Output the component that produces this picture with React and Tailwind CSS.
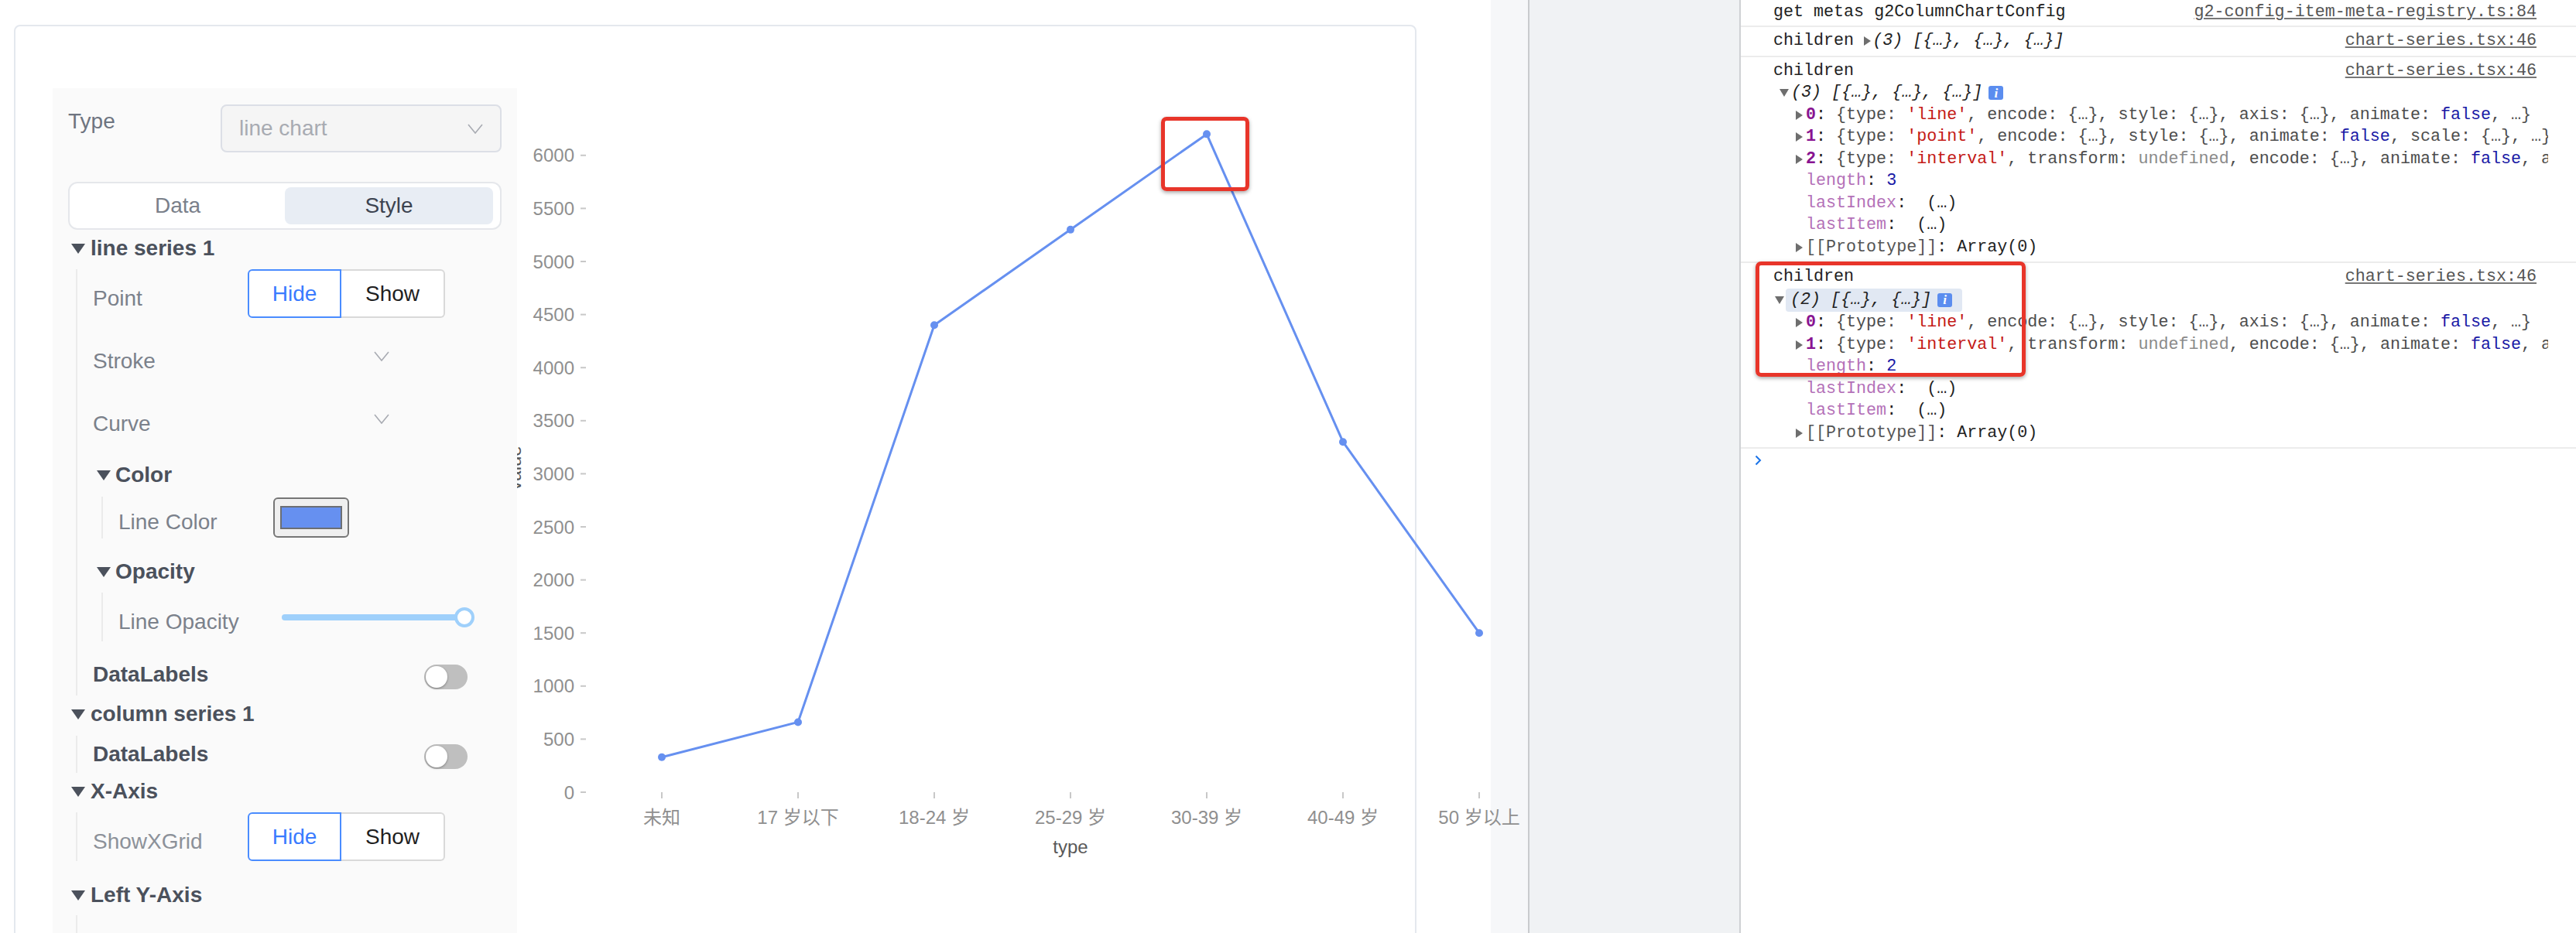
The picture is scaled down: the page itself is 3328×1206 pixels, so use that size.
import React from "react";

const cats = ["未知", "17 岁以下", "18-24 岁", "25-29 岁", "30-39 岁", "40-49 岁", "50 岁以上"];
const vals = [330, 660, 4400, 5300, 6200, 3300, 1500];
const X = (i) => 187 + 176 * i;
const Y = (v) => 910 - v * 0.1372;

function Chart() {
  const pts = vals.map((v, i) => `${X(i)},${Y(v).toFixed(1)}`).join(" ");
  const ticks = Array.from({ length: 13 }, (_, i) => i * 500);
  return (
    <svg
      width="1320"
      height="1092"
      viewBox="0 0 1320 1092"
      className="shrink-0"
      fontFamily="'Liberation Sans','Noto Sans CJK SC',sans-serif"
    >
      <text transform="translate(5,491) rotate(-90)" textAnchor="middle" fontSize="24" fill="#555">
        value
      </text>
      {ticks.map((t) => (
        <g key={t}>
          <text x="74" y={Y(t)} textAnchor="end" dominantBaseline="central" fontSize="24" fill="#8f8f8f">
            {t}
          </text>
          <line x1="82" x2="89" y1={Y(t)} y2={Y(t)} stroke="#c8c8c8" strokeWidth="2" />
        </g>
      ))}
      {cats.map((c, i) => (
        <g key={c}>
          <line x1={X(i)} x2={X(i)} y1="910" y2="918" stroke="#c8c8c8" strokeWidth="2" />
          <text x={X(i)} y="942" textAnchor="middle" dominantBaseline="central" fontSize="24" fill="#8f8f8f">
            {c}
          </text>
        </g>
      ))}
      <text x="715" y="980" textAnchor="middle" dominantBaseline="central" fontSize="24" fill="#595959">
        type
      </text>
      <polyline points={pts} fill="none" stroke="#6690f0" strokeWidth="3" strokeLinejoin="round" />
      {vals.map((v, i) => (
        <circle key={i} cx={X(i)} cy={Y(v)} r="5" fill="#6690f0" />
      ))}
    </svg>
  );
}

function Chevron() {
  return (
    <svg width="20" height="13" viewBox="0 0 20 13" className="shrink-0">
      <path d="M1 1 L10 12 L19 1" fill="none" stroke="#a8abb2" strokeWidth="1.6" />
    </svg>
  );
}

function Header({ children, nested }) {
  return (
    <div
      className={`flex h-[44px] items-center text-[28px] font-bold text-[#4b515c] ${
        nested ? "pl-[5px]" : "pl-[4px]"
      }`}
    >
      <svg width="18" height="13" viewBox="0 0 18 13" className={nested ? "mr-[6px]" : "mr-[7px]"}>
        <path d="M0 0H18L9 13Z" fill="#4b515c" />
      </svg>
      {children}
    </div>
  );
}

function HideShow() {
  return (
    <div className="flex h-[63px] text-[28px]">
      <div className="flex w-[121px] items-center justify-center rounded-l-[6px] border-2 border-[#4a8cff] bg-white text-[#3a7bff]">
        Hide
      </div>
      <div className="flex w-[134px] items-center justify-center rounded-r-[6px] border-2 border-l-0 border-[#d9d9d9] bg-white text-[#1f1f1f]">
        Show
      </div>
    </div>
  );
}

function Toggle() {
  return (
    <div className="mt-[6px] flex h-[32px] w-[56px] items-center rounded-full bg-[#bfbfbf] p-[2px]">
      <div className="h-[28px] w-[28px] rounded-full bg-white shadow-[0_1px_3px_rgba(0,0,0,0.35)]" />
    </div>
  );
}

function Panel() {
  const label = "text-[28px] text-[#7b818b] pt-[12px]";
  return (
    <div className="relative z-10 h-[1200px] w-[600px] shrink-0 bg-[#fafafa] px-[20px] pt-[21px]">
      <div className="flex h-[62px] items-start justify-between">
        <span className="text-[28px] leading-[44px] text-[#6e7480]">Type</span>
        <div className="flex h-[62px] w-[363px] items-center justify-between rounded-[8px] border-2 border-[#dcdfe6] bg-[#f5f5f5] pl-[22px] pr-[22px] text-[28px] text-[#a8abb2]">
          <span>line chart</span>
          <Chevron />
        </div>
      </div>

      <div className="mt-[38px] grid h-[62px] grid-cols-2 gap-[4px] rounded-[12px] border-2 border-[#e5e7eb] bg-white py-[5px] pl-[5px] pr-[9px]">
        <div className="flex items-center justify-center text-[28px] text-[#7a808a]">Data</div>
        <div className="flex items-center justify-center rounded-[8px] bg-[#e8edf4] text-[28px] text-[#3c4350]">
          Style
        </div>
      </div>

      <div className="mt-[2px]">
        <Header>line series 1</Header>
      </div>
      <div className="ml-[10px] mt-[5px] border-l-2 border-[#ebebeb] pl-[20px]">
        <div className="flex h-[63px] items-center">
          <span className={`w-[200px] ${label}`}>Point</span>
          <HideShow />
        </div>
        <div className="mt-[18px] flex h-[63px] items-center">
          <span className={`w-[363px] ${label}`}>Stroke</span>
          <Chevron />
        </div>
        <div className="mt-[18px] flex h-[63px] items-center">
          <span className={`w-[363px] ${label}`}>Curve</span>
          <Chevron />
        </div>

        <div className="mt-[19px]">
          <Header nested>Color</Header>
        </div>
        <div className="ml-[11px] mt-[6px] border-l-2 border-[#ebebeb] pl-[20px]">
          <div className="flex h-[54px] items-center">
            <span className={`w-[200px] ${label}`}>Line Color</span>
            <div className="flex h-[52px] w-[98px] items-center justify-center rounded-[6px] border-2 border-[#767676] bg-[#efefef]">
              <div className="h-[30px] w-[80px] border-2 border-[#6b6e73] bg-[#6690f0]" />
            </div>
          </div>
        </div>

        <div className="mt-[21px]">
          <Header nested>Opacity</Header>
        </div>
        <div className="ml-[11px] mt-[5px] border-l-2 border-[#ebebeb] pl-[20px]">
          <div className="flex h-[63px] items-center">
            <span className={`w-[211px] ${label}`}>Line Opacity</span>
            <div className="relative flex h-[26px] w-[248px] items-center">
              <div className="h-[8px] w-full rounded-full bg-[#9fd0fb]" />
              <div className="absolute left-[223px] top-0 h-[26px] w-[26px] rounded-full border-[4px] border-[#9fd0fb] bg-white" />
            </div>
          </div>
        </div>

        <div className="mt-[16px] flex h-[54px] items-center">
          <span className="w-[428px] text-[28px] font-bold text-[#4b515c]">DataLabels</span>
          <Toggle />
        </div>
      </div>

      <div className="mt-[2px]">
        <Header>column series 1</Header>
      </div>
      <div className="ml-[10px] mt-[6px] border-l-2 border-[#ebebeb] pl-[20px]">
        <div className="flex h-[48px] items-center">
          <span className="w-[428px] text-[28px] font-bold text-[#4b515c]">DataLabels</span>
          <Toggle />
        </div>
      </div>

      <div className="mt-[2px]">
        <Header>X-Axis</Header>
      </div>
      <div className="ml-[10px] mt-[5px] border-l-2 border-[#ebebeb] pl-[20px]">
        <div className="flex h-[63px] items-center">
          <span className="w-[200px] pt-[12px] text-[28px] text-[#8c9199]">ShowXGrid</span>
          <HideShow />
        </div>
      </div>

      <div className="mt-[22px]">
        <Header>Left Y-Axis</Header>
      </div>
      <div className="ml-[10px] mt-[4px] h-[80px] border-l-2 border-[#ebebeb]" />
    </div>
  );
}

function TriRight() {
  return (
    <svg width="9" height="12" viewBox="0 0 9 12" className="shrink-0">
      <path d="M0 0 L9 6 L0 12Z" fill="#6e6e6e" />
    </svg>
  );
}

function TriDown() {
  return (
    <svg width="12" height="10" viewBox="0 0 12 10" className="shrink-0">
      <path d="M0 0H12L6 10Z" fill="#6e6e6e" />
    </svg>
  );
}

function Info() {
  return (
    <span className="ml-[8px] inline-flex h-[18px] w-[19px] items-center justify-center rounded-[3px] bg-[#5b8def] font-['Liberation_Serif',serif] text-[17px] font-bold italic leading-none text-white">
      i
    </span>
  );
}

function Link({ children }) {
  return <span className="text-[#555] underline decoration-[#777]">{children}</span>;
}

function Item({ k, children }) {
  return (
    <div className="-mr-[15px] flex items-center overflow-hidden whitespace-pre pl-[29px]">
      <TriRight />
      <span className="ml-[4px] font-bold text-[#881391]">{k}</span>
      <span className="text-[#222]">: </span>
      <span className="text-[#4d4d4d]">{children}</span>
    </div>
  );
}

const Str = ({ children }) => <span className="text-[#c41a16]">{children}</span>;
const Kw = ({ children }) => <span className="text-[#1a1aa6]">{children}</span>;
const Und = ({ children }) => <span className="text-[#8a8a8a]">{children}</span>;
const Meta = ({ children }) => <span className="text-[#b471b8]">{children}</span>;

function Tail({ len }) {
  return (
    <>
      <div className="whitespace-pre pl-[42px]">
        <Meta>length</Meta>
        <span className="text-[#222]">: </span>
        <Kw>{len}</Kw>
      </div>
      <div className="whitespace-pre pl-[42px]">
        <Meta>lastIndex</Meta>
        <span className="text-[#222]">:  (…)</span>
      </div>
      <div className="whitespace-pre pl-[42px]">
        <Meta>lastItem</Meta>
        <span className="text-[#222]">:  (…)</span>
      </div>
      <div className="flex items-center whitespace-pre pl-[29px]">
        <TriRight />
        <span className="ml-[4px] text-[#555]">[[Prototype]]</span>
        <span className="text-[#222]">: Array(0)</span>
      </div>
    </>
  );
}

function LineItem({ k }) {
  return (
    <Item k={k}>
      {"{type: "}
      <Str>'line'</Str>
      {", encode: {…}, style: {…}, axis: {…}, animate: "}
      <Kw>false</Kw>
      {", …}"}
    </Item>
  );
}

function IntervalItem({ k }) {
  return (
    <Item k={k}>
      {"{type: "}
      <Str>'interval'</Str>
      {", transform: "}
      <Und>undefined</Und>
      {", encode: {…}, animate: "}
      <Kw>false</Kw>
      {", axis: {…}, …}"}
    </Item>
  );
}

function Console() {
  const row = "border-b-2 border-[#ececec] pl-[42px] pr-[51px]";
  return (
    <div className="min-w-0 flex-1 bg-white font-['Liberation_Mono',monospace] text-[21.7px] leading-[28.5px] text-[#222]">
      <div className={`${row} flex justify-between pb-[2.5px] pt-[2px]`}>
        <span>get metas g2ColumnChartConfig</span>
        <Link>g2-config-item-meta-registry.ts:84</Link>
      </div>
      <div className={`${row} flex justify-between py-[4px]`}>
        <span className="flex items-center whitespace-pre">
          {"children "}
          <TriRight />
          <span className="ml-[2px] italic">(3) [{"{…}"}, {"{…}"}, {"{…}"}]</span>
        </span>
        <Link>chart-series.tsx:46</Link>
      </div>
      <div className={`${row} py-[4px]`}>
        <div className="flex justify-between">
          <span>children</span>
          <Link>chart-series.tsx:46</Link>
        </div>
        <div className="flex items-center pl-[8px]">
          <TriDown />
          <span className="ml-[3px] whitespace-pre italic">(3) [{"{…}"}, {"{…}"}, {"{…}"}]</span>
          <Info />
        </div>
        <LineItem k="0" />
        <Item k="1">
          {"{type: "}
          <Str>'point'</Str>
          {", encode: {…}, style: {…}, animate: "}
          <Kw>false</Kw>
          {", scale: {…}, …}"}
        </Item>
        <IntervalItem k="2" />
        <Tail len="3" />
      </div>
      <div className={`${row} py-[4px]`}>
        <div className="flex justify-between">
          <span>children</span>
          <Link>chart-series.tsx:46</Link>
        </div>
        <div className="flex items-center pl-[2px]">
          <TriDown />
          <span className="ml-[2px] flex items-center rounded-[4px] bg-[#e1e8f3] py-[1px] pl-[6px] pr-[13px]">
            <span className="whitespace-pre italic">(2) [{"{…}"}, {"{…}"}]</span>
            <Info />
          </span>
        </div>
        <LineItem k="0" />
        <IntervalItem k="1" />
        <Tail len="2" />
      </div>
      <div className="pl-[18px] pt-[8px]">
        <svg width="9" height="14" viewBox="0 0 9 14">
          <path d="M1.5 1.5 L7 7 L1.5 12.5" fill="none" stroke="#1a73e8" strokeWidth="2" />
        </svg>
      </div>
    </div>
  );
}

export default function App() {
  return (
    <div className="relative flex h-[1206px] w-[3328px] overflow-hidden bg-white font-['Liberation_Sans','Noto_Sans_CJK_SC',sans-serif]">
      <div className="relative z-10 w-[1926px] shrink-0 pl-[18px] pt-[32px]">
        <div className="flex h-[1300px] w-[1812px] items-start rounded-[8px] border-2 border-[#e4e8ee] pl-[48px] pt-[80px]">
          <Panel />
          <Chart />
        </div>
      </div>
      <div className="w-[50px] shrink-0 border-r-2 border-[#c9cbce] bg-[#f6f7f9]" />
      <div className="w-[273px] shrink-0 border-r-2 border-[#cfd1d4] bg-[#f0f2f4]" />
      <Console />

      <div className="absolute left-[1500px] top-[151px] z-20 h-[96px] w-[114px] rounded-[7px] border-[5px] border-[#e8352a] shadow-[0_2px_5px_rgba(0,0,0,0.35)]" />
      <div className="absolute left-[2268px] top-[338px] z-20 h-[149px] w-[349px] rounded-[7px] border-[5px] border-[#e8352a] shadow-[0_2px_5px_rgba(0,0,0,0.35)]" />
    </div>
  );
}
